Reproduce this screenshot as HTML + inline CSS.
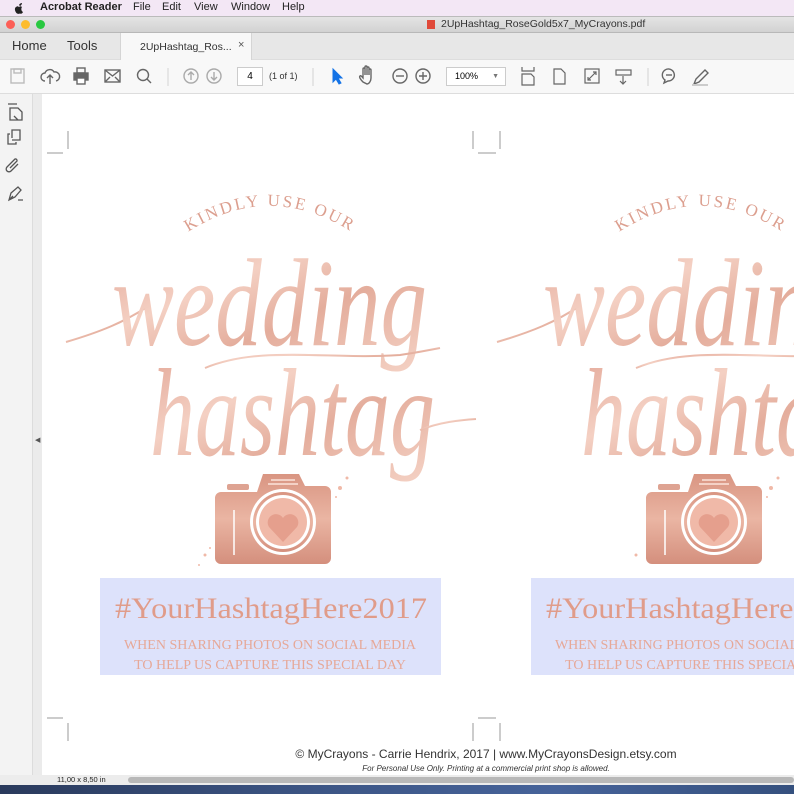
<!DOCTYPE html>
<html><head><meta charset="utf-8">
<style>
*{margin:0;padding:0;box-sizing:border-box}
body{width:794px;height:794px;overflow:hidden;position:relative;background:#fff;font-family:"Liberation Sans",sans-serif}
.abs{position:absolute}
#menu{left:0;top:0;width:794px;height:16px;background:#f3e7f5;font-size:11px;color:#222}
#menu span{position:absolute;top:1px}
#title{left:0;top:16px;width:794px;height:17px;background:linear-gradient(#e4e4e4,#d2d2d2);border-top:1px solid #bbb;border-bottom:1px solid #b8b8b8}
.dot{position:absolute;top:3px;width:9px;height:9px;border-radius:50%}
#tabs{left:0;top:33px;width:794px;height:27px;background:#e7e7e7;border-bottom:1px solid #ddd}
#tool{left:0;top:60px;width:794px;height:34px;background:#f8f8f8;border-bottom:1px solid #ddd}
#side{left:0;top:94px;width:33px;height:681px;background:#f3f3f3;border-right:1px solid #dcdcdc}
#strip{left:33px;top:94px;width:9px;height:681px;background:#ebebeb}
#status{left:0;top:775px;width:794px;height:10px;background:#ececec}
#desk{left:0;top:785px;width:794px;height:9px;background:linear-gradient(90deg,#2a3a5c,#3c5585 40%,#46639a 70%,#35507e)}
</style></head><body>
<div id="menu" class="abs">
<svg style="position:absolute;left:14px;top:2px" width="10" height="12"><path d="M5 3c1-2 3-2 3-2s0 2-2 3M2 5c1-1 2-1 3 0 1-1 2-1 3 0-1 1-1 4 1 5-1 2-2 2-3 1.5-1 .5-2 .5-3 0C1 10 0 6 2 5z" fill="#222"/></svg>
<span style="left:40px;font-weight:bold">Acrobat Reader</span>
<span style="left:133px">File</span><span style="left:162px">Edit</span><span style="left:194px">View</span><span style="left:231px">Window</span><span style="left:282px">Help</span>
</div>
<div id="title" class="abs">
<div class="dot" style="left:6px;background:#fc5f57"></div>
<div class="dot" style="left:21px;background:#fdbc2e"></div>
<div class="dot" style="left:36px;background:#28c840"></div>
<div style="position:absolute;left:427px;top:3px;width:8px;height:9px;background:#e04a3a"></div>
<span style="position:absolute;left:441px;top:1px;font-size:10.5px;color:#333">2UpHashtag_RoseGold5x7_MyCrayons.pdf</span>
</div>
<div id="tabs" class="abs">
<span style="position:absolute;left:12px;top:5px;font-size:13px;color:#333">Home</span>
<span style="position:absolute;left:67px;top:5px;font-size:13px;color:#333">Tools</span>
<div style="position:absolute;left:120px;top:0;width:132px;height:27px;background:#f8f8f8;border-left:1px solid #d5d5d5;border-right:1px solid #d5d5d5"></div>
<span style="position:absolute;left:140px;top:8px;font-size:10.5px;color:#333">2UpHashtag_Ros...</span>
<span style="position:absolute;left:238px;top:6px;font-size:11px;color:#555">×</span>
</div>
<div id="tool" class="abs">
<svg width="794" height="34" style="position:absolute;left:0;top:0" fill="none" stroke="#666" stroke-width="1.4">
<rect x="11" y="9" width="13" height="14" stroke="#bbb"/><rect x="14" y="9" width="7" height="4" stroke="#bbb"/>
<path d="M45 21a4 4 0 0 1 0-8a5 5 0 0 1 9-1a4 4 0 0 1 2 9M50 24v-9M47 18l3-3 3 3"/>
<rect x="74" y="13" width="14" height="7" fill="#666"/><rect x="77" y="8" width="8" height="5"/><rect x="77" y="18" width="8" height="6" fill="#fff"/>
<rect x="105" y="10" width="15" height="12"/><path d="M105 10l7.5 6 7.5-6M105 22l5-5M120 22l-5-5"/>
<circle cx="143" cy="15" r="5.5"/><path d="M147 19l4 4"/>
<path d="M168 8v18" stroke="#ddd"/>
<circle cx="191" cy="16" r="7" stroke="#aaa"/><path d="M191 20v-8M188 15l3-3 3 3" stroke="#aaa"/>
<circle cx="214" cy="16" r="7" stroke="#aaa"/><path d="M214 12v8M211 17l3 3 3-3" stroke="#aaa"/>
<path d="M313 8v18" stroke="#ddd"/>
<path d="M333 9l0 13 3-3 3 5 2-1-3-5h4z" fill="#1473e6" stroke="#1473e6" stroke-width="1"/>
<path d="M363 22c-3-3-4-5-3-6s2 1 3 2v-9a1 1 0 0 1 2 0v6-8a1 1 0 0 1 2 0v8-7a1 1 0 0 1 2 0v7-5a1 1 0 0 1 2 0v8c0 3-2 6-4 6z"/>
<circle cx="400" cy="16" r="7"/><path d="M396 16h8"/>
<circle cx="423" cy="16" r="7"/><path d="M419 16h8M423 12v8"/>
<path d="M522 7v4h12v-4M522 14h9l3 3v8h-12z" stroke-width="1.2"/>
<path d="M554 9h7l4 4v11h-11z" stroke-width="1.2"/>
<rect x="585" y="9" width="14" height="14" stroke-width="1.2"/><path d="M588 20l8-8M593 12h3v3M588 17v3h3" stroke-width="1.2"/>
<rect x="616" y="10" width="15" height="5" stroke-width="1.2"/><path d="M623 16v8M620 21l3 3 3-3" stroke-width="1.2"/>
<path d="M648 8v18" stroke="#ddd"/>
<path d="M664 23l1-3a6 6 0 1 1 3 1z"/><path d="M666 15h6"/>
<path d="M694 24l2-5 9-9 3 3-9 9z"/><path d="M692 25h16" stroke="#ccc" stroke-width="2"/>
</svg>
<div style="position:absolute;left:237px;top:7px;width:26px;height:19px;background:#fff;border:1px solid #ccc;font-size:10px;text-align:center;line-height:17px">4</div>
<span style="position:absolute;left:269px;top:11px;font-size:9px;color:#333">(1 of 1)</span>
<div style="position:absolute;left:446px;top:7px;width:60px;height:19px;background:#fff;border:1px solid #ccc;font-size:9px;line-height:17px;padding-left:8px">100%<span style="position:absolute;right:6px;font-size:7px;color:#777">▼</span></div>
</div>
<div id="side" class="abs">
<svg width="33" height="120" fill="none" stroke="#555" stroke-width="1.3">
<path d="M10 14h8l4 4v8h-12z M8 10h9M14 22l4 4" />
<path d="M12 44v-8h8v10h-8M10 40h-2v10h8v-2"/>
<path d="M18 70l-7 7a2.5 2.5 0 0 1-4-4l8-8a1.6 1.6 0 0 1 2 2l-7 7"/>
<path d="M9 106l2-7 7-6 3 3-6 7zM9 106l4-4M18 106h5"/>
</svg>
</div>
<div id="strip" class="abs"><div style="position:absolute;left:2px;top:342px;font-size:7px;color:#555">◀</div></div>

<svg class="abs" style="left:0;top:0" width="794" height="775" viewBox="0 0 794 775">
<defs>
<linearGradient id="rg" x1="0" y1="0" x2="1" y2="1">
<stop offset="0" stop-color="#e2a595"/><stop offset="0.35" stop-color="#f4d0c3"/><stop offset="0.6" stop-color="#e4ad9c"/><stop offset="1" stop-color="#f5d3c6"/>
</linearGradient>
<linearGradient id="cg" x1="0" y1="0" x2="0" y2="1">
<stop offset="0" stop-color="#d99582"/><stop offset="0.5" stop-color="#eab5a3"/><stop offset="1" stop-color="#d48f7d"/>
</linearGradient>
<path id="arc1" d="M188 232 Q272 178 358 236"/>
</defs>
<g stroke="#999" stroke-width="1">
<path d="M47 153h16M68 131v18M478 153h18M473 131v18M500 131v18M47 718h16M68 723v18M478 718h18M473 723v18M500 723v18"/>
</g>
<g id="d1">
<text font-family="Liberation Serif,serif" font-size="17" fill="#dc9f8f" letter-spacing="2.5"><textPath href="#arc1">KINDLY USE OUR</textPath></text>
<path d="M66 342 C100 332 125 322 150 305" stroke="url(#rg)" stroke-width="2" fill="none"/>
<text transform="translate(112,345) scale(1,1.25)" font-family="Liberation Serif,serif" font-style="italic" font-size="100" fill="url(#rg)" textLength="315" lengthAdjust="spacingAndGlyphs">wedding</text>
<path d="M205 368 C260 345 330 360 400 355 C420 352 430 350 440 348" stroke="url(#rg)" stroke-width="2" fill="none"/>
<text transform="translate(150,455) scale(1,1.25)" font-family="Liberation Serif,serif" font-style="italic" font-size="100" fill="url(#rg)" textLength="285" lengthAdjust="spacingAndGlyphs">hashtag</text>
<path d="M420 430 C440 422 460 420 476 419" stroke="url(#rg)" stroke-width="2" fill="none"/>
<path d="M221 492 h36 l6-18 h36 l6 12 h20 a6 6 0 0 1 6 6 v66 a6 6 0 0 1-6 6 h-104 a6 6 0 0 1-6-6 v-60 a6 6 0 0 1 6-6z" fill="url(#cg)"/>
<rect x="227" y="484" width="22" height="6" rx="2" fill="#dea392"/>
<path d="M234 510v45" stroke="#fff" stroke-width="1.5"/>
<path d="M271 480h24M268 484h30" stroke="#fbe3da" stroke-width="1.5"/>
<circle cx="283" cy="522" r="33" fill="#fff"/><circle cx="283" cy="522" r="30" fill="url(#cg)"/><circle cx="283" cy="522" r="27" fill="#fff"/><circle cx="283" cy="522" r="24" fill="#f0b9a8"/>
<path d="M283 542 l-14-15 a8 8 0 0 1 14-9 a8 8 0 0 1 14 9z" fill="#e59f8d"/>
<g fill="#f0b9a8"><circle cx="340" cy="488" r="2"/><circle cx="347" cy="478" r="1.5"/><circle cx="336" cy="497" r="1"/><circle cx="205" cy="555" r="1.5"/><circle cx="199" cy="565" r="1"/><circle cx="210" cy="548" r="1"/></g>
<rect x="100" y="578" width="341" height="97" fill="#dde2fb"/>
<text x="115" y="618" font-family="Liberation Serif,serif" font-size="30" fill="#e09c8a" textLength="312" lengthAdjust="spacingAndGlyphs">#YourHashtagHere2017</text>
<text x="270" y="649" text-anchor="middle" font-family="Liberation Serif,serif" font-size="14" fill="#e6a898">WHEN SHARING PHOTOS ON SOCIAL MEDIA</text>
<text x="270" y="669" text-anchor="middle" font-family="Liberation Serif,serif" font-size="14" fill="#e6a898">TO HELP US CAPTURE THIS SPECIAL DAY</text>
</g>
<g transform="translate(431,0)">
<text font-family="Liberation Serif,serif" font-size="17" fill="#dc9f8f" letter-spacing="2.5"><textPath href="#arc1">KINDLY USE OUR</textPath></text>
<path d="M66 342 C100 332 125 322 150 305" stroke="url(#rg)" stroke-width="2" fill="none"/>
<text transform="translate(112,345) scale(1,1.25)" font-family="Liberation Serif,serif" font-style="italic" font-size="100" fill="url(#rg)" textLength="315" lengthAdjust="spacingAndGlyphs">wedding</text>
<path d="M205 368 C260 345 330 360 400 355" stroke="url(#rg)" stroke-width="2" fill="none"/>
<text transform="translate(150,455) scale(1,1.25)" font-family="Liberation Serif,serif" font-style="italic" font-size="100" fill="url(#rg)" textLength="285" lengthAdjust="spacingAndGlyphs">hashtag</text>
<path d="M221 492 h36 l6-18 h36 l6 12 h20 a6 6 0 0 1 6 6 v66 a6 6 0 0 1-6 6 h-104 a6 6 0 0 1-6-6 v-60 a6 6 0 0 1 6-6z" fill="url(#cg)"/>
<rect x="227" y="484" width="22" height="6" rx="2" fill="#dea392"/>
<path d="M234 510v45" stroke="#fff" stroke-width="1.5"/>
<path d="M271 480h24M268 484h30" stroke="#fbe3da" stroke-width="1.5"/>
<circle cx="283" cy="522" r="33" fill="#fff"/><circle cx="283" cy="522" r="30" fill="url(#cg)"/><circle cx="283" cy="522" r="27" fill="#fff"/><circle cx="283" cy="522" r="24" fill="#f0b9a8"/>
<path d="M283 542 l-14-15 a8 8 0 0 1 14-9 a8 8 0 0 1 14 9z" fill="#e59f8d"/>
<g fill="#f0b9a8"><circle cx="340" cy="488" r="2"/><circle cx="347" cy="478" r="1.5"/><circle cx="336" cy="497" r="1"/><circle cx="205" cy="555" r="1.5"/></g>
<rect x="100" y="578" width="341" height="97" fill="#dde2fb"/>
<text x="115" y="618" font-family="Liberation Serif,serif" font-size="30" fill="#e09c8a" textLength="312" lengthAdjust="spacingAndGlyphs">#YourHashtagHere2017</text>
<text x="270" y="649" text-anchor="middle" font-family="Liberation Serif,serif" font-size="14" fill="#e6a898">WHEN SHARING PHOTOS ON SOCIAL MEDIA</text>
<text x="270" y="669" text-anchor="middle" font-family="Liberation Serif,serif" font-size="14" fill="#e6a898">TO HELP US CAPTURE THIS SPECIAL DAY</text>
</g>
<text x="486" y="758" text-anchor="middle" font-family="Liberation Sans,sans-serif" font-size="12" fill="#333">© MyCrayons - Carrie Hendrix, 2017 | www.MyCrayonsDesign.etsy.com</text>
<text x="486" y="771" text-anchor="middle" font-family="Liberation Sans,sans-serif" font-style="italic" font-size="8" fill="#333">For Personal Use Only. Printing at a commercial print shop is allowed.</text>
</svg>
<div id="status" class="abs">
<span style="position:absolute;left:57px;top:0;font-size:7.5px;color:#222">11,00 x 8,50 in</span>
<div style="position:absolute;left:128px;top:2px;width:666px;height:6px;background:#b8b8b8;border-radius:3px"></div>
</div>
<div id="desk" class="abs"></div>
</body></html>
